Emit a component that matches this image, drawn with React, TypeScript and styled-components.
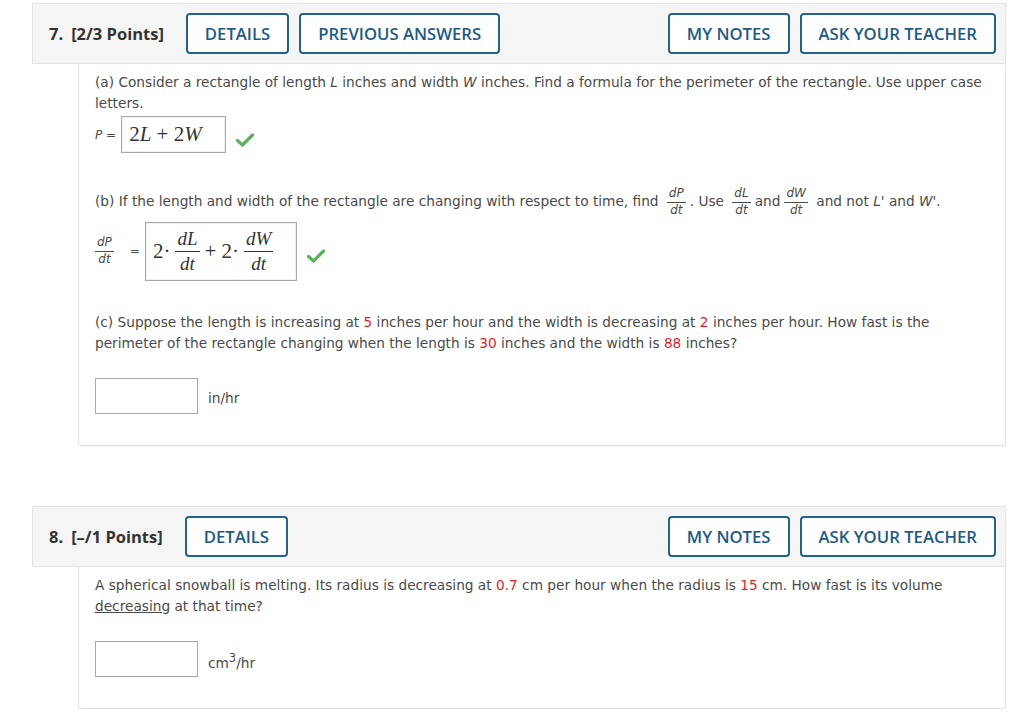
import React from "react";
import styled, { createGlobalStyle } from "styled-components";

const GlobalStyle = createGlobalStyle`
    html, body {
        margin: 0;
        padding: 0;
        background: #fff;
    }
`;

const Page = styled.div`
    width: 974px;
    margin-left: 32px;
    padding-top: 3px;
    font-family: "DejaVu Sans", Verdana, sans-serif;
    font-size: 13.7px;
    color: #4a4a4a;
`;

const Question = styled.section<{ gapAfter?: number }>`
    margin-bottom: ${({ gapAfter }) => gapAfter ?? 0}px;
`;

const Header = styled.div`
    display: flex;
    align-items: center;
    height: 59px;
    padding: 0 9px 0 16px;
    background: #f5f5f5;
    border: 1px solid #e4e4e4;
    font-family: "Open Sans", sans-serif;
`;

const Title = styled.div`
    font-size: 16.5px;
    font-weight: 700;
    color: #333;
    margin-right: 22px;
    white-space: nowrap;
`;

const Num = styled.span`
    margin-right: 8px;
`;

const Spacer = styled.div`
    flex: 1;
`;

const Button = styled.button`
    height: 41px;
    padding: 0 17px;
    margin-left: 10px;
    background: #fff;
    border: 2px solid #22628c;
    border-radius: 4px;
    color: #1d5a85;
    font-family: "Open Sans", sans-serif;
    font-size: 16.7px;
    font-weight: 600;
    text-transform: uppercase;
    cursor: pointer;

    &:first-of-type {
        margin-left: 0;
    }
`;

const Body = styled.div<{ bottom: number }>`
    margin-left: 46px;
    padding: 8px 16px ${({ bottom }) => bottom}px 16px;
    border: 1px solid #e2e2e2;
    border-top: none;
    border-radius: 0 0 3px 3px;
    box-shadow: 0 1px 1px rgba(0, 0, 0, 0.04);
`;

const Para = styled.div<{ mt?: number }>`
    margin: ${({ mt }) => mt ?? 0}px 0 0 0;
    line-height: 21px;
`;

const Var = styled.i`
    font-style: italic;
`;

const Red = styled.span`
    color: #e3222b;
`;

const Under = styled.span`
    text-decoration: underline;
`;

const AnswerRow = styled.div<{ mt: number }>`
    display: flex;
    align-items: center;
    margin-top: ${({ mt }) => mt}px;
`;

const Label = styled.span`
    font-size: 12px;
    margin-right: 5px;
    display: inline-flex;
    align-items: center;
`;

const Eq = styled.span`
    font-size: 12px;
    margin: 0 5px 0 11px;
`;

const MathBox = styled.div<{ w: number; h: number }>`
    display: flex;
    align-items: center;
    width: ${({ w }) => w}px;
    height: ${({ h }) => h}px;
    box-sizing: border-box;
    padding: 0 7px;
    border: 1px solid #a9a9a9;
    box-shadow: inset 0 0 0 1px #f0f0f0;
    font-family: "Liberation Serif", "Times New Roman", serif;
    font-size: 21px;
    color: #333;
    white-space: pre;
`;

const MathI = styled.i`
    font-style: italic;
`;

const Frac = styled.span<{ size: number; serif?: boolean; gap?: number }>`
    display: inline-flex;
    flex-direction: column;
    align-items: center;
    vertical-align: middle;
    margin: 0 ${({ gap }) => gap ?? 4}px;
    font-size: ${({ size }) => size}px;
    line-height: 1.15;
    font-style: italic;
    font-family: ${({ serif }) =>
        serif ? `"Liberation Serif", "Times New Roman", serif` : `"DejaVu Sans", Verdana, sans-serif`};
`;

const FracTop = styled.span`
    padding: 0 2px 1px 2px;
    border-bottom: 1px solid currentColor;
`;

const FracBot = styled.span`
    padding: 1px 2px 0 2px;
`;

const Input = styled.input`
    width: 103px;
    height: 36px;
    box-sizing: border-box;
    border: 1px solid #a9a9a9;
    background: #fff;
    margin: 0;
`;

const Unit = styled.span`
    margin-left: 10px;
    font-size: 13.7px;
    position: relative;
    top: 2px;
`;

const Check = () => (
    <svg width="18" height="14" viewBox="0 0 18 14" style={{ marginLeft: 10, marginTop: 10 }}>
        <path d="M1.5 7.5 L6.5 12 L16.5 2" fill="none" stroke="#5cb05c" strokeWidth="3.2" strokeLinecap="round" strokeLinejoin="round" />
    </svg>
);

const F: React.FC<{ top: React.ReactNode; bot: React.ReactNode; size: number; serif?: boolean; gap?: number }> = ({
    top,
    bot,
    size,
    serif,
    gap,
}) => (
    <Frac size={size} serif={serif} gap={gap}>
        <FracTop>{top}</FracTop>
        <FracBot>{bot}</FracBot>
    </Frac>
);

export default function App() {
    return (
        <>
            <GlobalStyle />
            <Page>
                <Question gapAfter={60}>
                    <Header>
                        <Title>
                            <Num>7.</Num>[2/3 Points]
                        </Title>
                        <Button>Details</Button>
                        <Button>Previous Answers</Button>
                        <Spacer />
                        <Button>My Notes</Button>
                        <Button>Ask Your Teacher</Button>
                    </Header>
                    <Body bottom={31}>
                        <Para>
                            (a) Consider a rectangle of length <Var>L</Var> inches and width <Var>W</Var> inches. Find a formula for
                            the perimeter of the rectangle. Use upper case letters.
                        </Para>
                        <AnswerRow mt={2}>
                            <Label>
                                <Var>P</Var>&nbsp;=
                            </Label>
                            <MathBox w={105} h={37}>
                                2<MathI>L</MathI> + 2<MathI>W</MathI>
                            </MathBox>
                            <Check />
                        </AnswerRow>

                        <Para mt={34}>
                            (b) If the length and width of the rectangle are changing with respect to time, find{" "}
                            <F size={12} top="dP" bot="dt" />. Use <F size={12} top="dL" bot="dt" />
                            and
                            <F size={12} top="dW" bot="dt" /> and not <Var>L</Var>' and <Var>W</Var>'.
                        </Para>
                        <AnswerRow mt={4}>
                            <Label>
                                <F size={12} top="dP" bot="dt" gap={0} />
                            </Label>
                            <Eq>=</Eq>
                            <MathBox w={152} h={59}>
                                2·
                                <F size={19} serif top="dL" bot="dt" gap={5} />+ 2·
                                <F size={19} serif top="dW" bot="dt" gap={5} />
                            </MathBox>
                            <Check />
                        </AnswerRow>

                        <Para mt={31}>
                            (c) Suppose the length is increasing at <Red>5</Red> inches per hour and the width is decreasing at{" "}
                            <Red>2</Red> inches per hour. How fast is the perimeter of the rectangle changing when the length is{" "}
                            <Red>30</Red> inches and the width is <Red>88</Red> inches?
                        </Para>
                        <AnswerRow mt={24}>
                            <Input />
                            <Unit>in/hr</Unit>
                        </AnswerRow>
                    </Body>
                </Question>

                <Question>
                    <Header>
                        <Title>
                            <Num>8.</Num>[–/1 Points]
                        </Title>
                        <Button>Details</Button>
                        <Spacer />
                        <Button>My Notes</Button>
                        <Button>Ask Your Teacher</Button>
                    </Header>
                    <Body bottom={31}>
                        <Para>
                            A spherical snowball is melting. Its radius is decreasing at <Red>0.7</Red> cm per hour when the radius is{" "}
                            <Red>15</Red> cm. How fast is its volume <Under>decreasing</Under> at that time?
                        </Para>
                        <AnswerRow mt={24}>
                            <Input />
                            <Unit>
                                cm<sup>3</sup>/hr
                            </Unit>
                        </AnswerRow>
                    </Body>
                </Question>
            </Page>
        </>
    );
}
